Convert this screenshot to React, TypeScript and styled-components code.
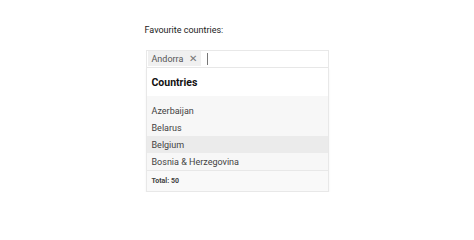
import React from 'react';
import styled, {createGlobalStyle} from 'styled-components';

const GlobalStyle = createGlobalStyle`
    body {
        margin: 0;
        background: #ffffff;
        font-family: Roboto, "Liberation Sans", sans-serif;
        color: #212121;
    }
`;

const Page = styled.div`
    display: flex;
    justify-content: center;
    padding-top: 24px;
`;

const Field = styled.div`
    width: 183px;
    display: flex;
    flex-direction: column;
`;

const Label = styled.label`
    font-size: 9px;
    line-height: 12px;
    color: #1a1a1a;
    margin-left: -1px;
    margin-bottom: 14px;
`;

const InputBox = styled.div`
    height: 18px;
    box-sizing: border-box;
    border: 1px solid #e8e8e8;
    display: flex;
    align-items: flex-end;
    padding: 0 1px 1px;
    gap: 6px;
`;

const Chip = styled.span`
    display: flex;
    align-items: center;
    gap: 6px;
    height: 15px;
    padding: 0 4px;
    background: #f0f0f0;
    font-size: 9px;
    color: #555555;
`;

const Remove = styled.span`
    font-size: 9.5px;
    color: #777777;
    line-height: 1;
`;

const Caret = styled.span`
    align-self: center;
    width: 1px;
    height: 12px;
    background: #777777;
`;

const Popup = styled.div`
    border: 1px solid #e8e8e8;
    border-top: none;
    box-shadow: 0 1px 2px rgba(0, 0, 0, 0.06);
    display: flex;
    flex-direction: column;
`;

const Header = styled.div`
    height: 28px;
    display: flex;
    align-items: center;
    padding-left: 5px;
    font-size: 10.5px;
    font-weight: 700;
    color: #111111;
    background: #ffffff;
`;

const List = styled.div`
    background: #f7f7f7;
    padding-top: 6px;
    display: flex;
    flex-direction: column;
`;

const Item = styled.div<{$active?: boolean}>`
    height: 17px;
    display: flex;
    align-items: center;
    padding-left: 5px;
    font-size: 9px;
    color: #424242;
    background: ${({$active}) => ($active ? '#ebebeb' : 'transparent')};
`;

const Footer = styled.div`
    height: 21px;
    box-sizing: border-box;
    display: flex;
    align-items: center;
    padding-left: 5px;
    border-top: 1px solid #e8e8e8;
    font-size: 7px;
    font-weight: 700;
    color: #424242;
    background: #f9f9f9;
`;

const countries = ['Azerbaijan', 'Belarus', 'Belgium', 'Bosnia & Herzegovina'];

export default function App() {
    return (
        <>
            <GlobalStyle />
            <Page>
                <Field>
                    <Label>Favourite countries:</Label>
                    <InputBox>
                        <Chip>
                            Andorra <Remove>✕</Remove>
                        </Chip>
                        <Caret />
                    </InputBox>
                    <Popup>
                        <Header>Countries</Header>
                        <List>
                            {countries.map(name => (
                                <Item key={name} $active={name === 'Belgium'}>
                                    {name}
                                </Item>
                            ))}
                        </List>
                        <Footer>Total: 50</Footer>
                    </Popup>
                </Field>
            </Page>
        </>
    );
}
